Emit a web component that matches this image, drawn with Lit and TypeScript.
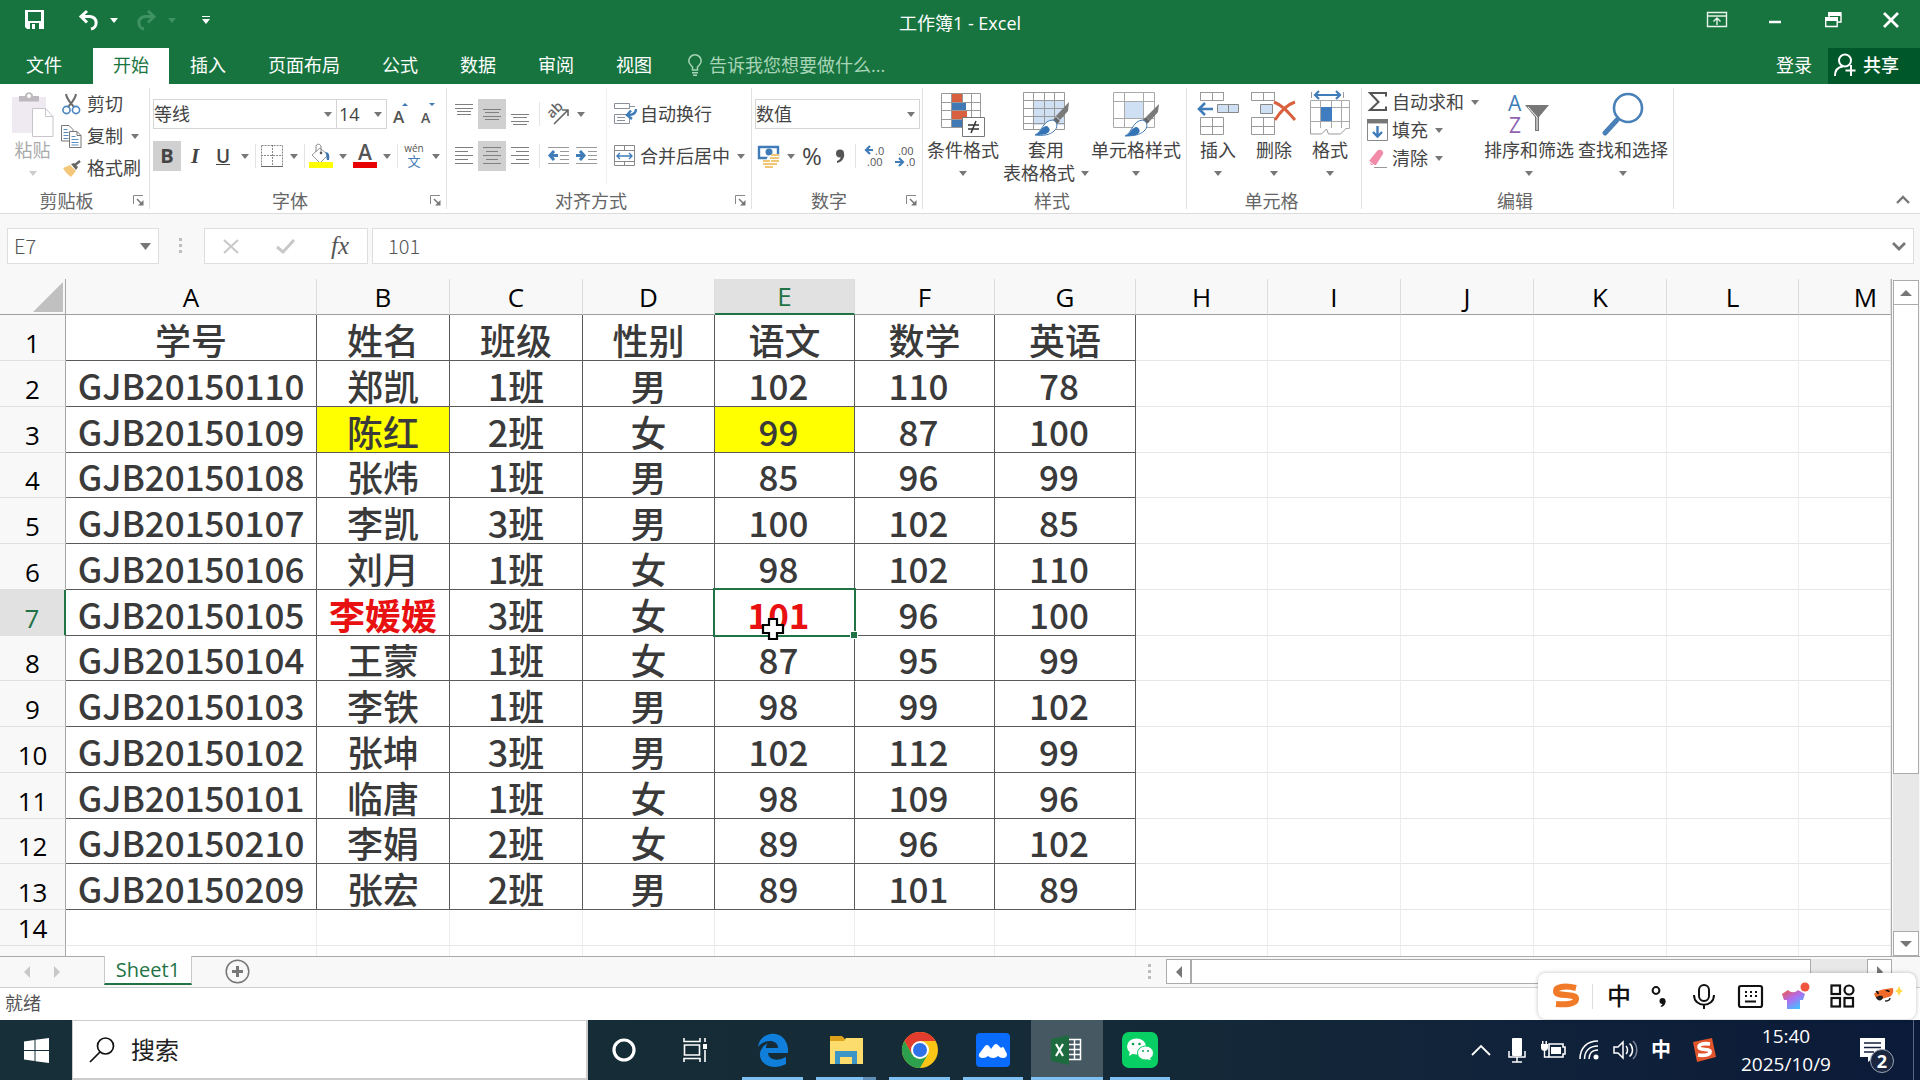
import { LitElement, html, css, svg, nothing, TemplateResult } from "lit";
import { customElement } from "lit/decorators.js";
import { classMap } from "lit/directives/class-map.js";

const icon = (w: number, h: number, body: unknown) =>
  html`<svg class="icon" width=${w} height=${h} viewBox="0 0 ${w} ${h}" fill="none" aria-hidden="true">${body}</svg>`;

const caret = html`<svg class="caret" width="8" height="5" viewBox="0 0 8 5" aria-hidden="true"><path d="M0 0h8L4 5z" fill="currentColor" /></svg>`;

const lines = (spans: number[][]) =>
  icon(20, 20, svg`<path d=${spans.map(([x, y, w]) => `M${x} ${y}.5h${w}`).join("")} stroke="#808080" />`);

const I = {
  save: icon(20, 20, svg`<path d="M0 0h19v19H2l-2-2z" fill="#fff"/><path d="M3 2h13v9H3zM5 13h9v6H5z" fill="#18743f"/><path d="M7 14h3v5H7z" fill="#fff"/>`),
  undo: icon(21, 21, svg`<path d="M3 6.5h9c8 1 8 11 1 12.5" stroke="#fff" stroke-width="3"/><path d="M9 1 3 6.5l6 6" stroke="#fff" stroke-width="3"/>`),
  redo: icon(21, 21, svg`<path d="M18 6.5H9C1 7.5 1 17.500 8 19" stroke="#3f9262" stroke-width="3"/><path d="m12 1 6 5.5-6 6" stroke="#3f9262" stroke-width="3"/>`),
  custom: icon(8, 8, svg`<path d="M0 .5h8" stroke="#fff"/><path d="M0 3h8L4 8z" fill="#fff"/>`),
  ribbonOpt: icon(20, 16, svg`<path d="M.5.5h19v14H.5zM.5 4h19M10 13V6M6.5 9.500 10 6l3.500 3.500" stroke="#e6f2ea" stroke-width="1.4"/>`),
  min: icon(14, 16, svg`<path d="M1 10h12" stroke="#fff" stroke-width="2.5"/>`),
  restore: icon(17, 16, svg`<path d="M4 5V1h12v9h-4" stroke="#fff" stroke-width="1.4"/><path d="M3 0h13v4H3zM0 5h13v4H0z" fill="#fff"/><path d="M.7 6h11.500v8.500H.7z" stroke="#fff" stroke-width="1.4"/>`),
  close: icon(16, 16, svg`<path d="m1 1 14 14M15 1 1 15" stroke="#fff" stroke-width="2.8"/>`),
  bulb: icon(14, 22, svg`<path d="M4.5 16v-3C3 11 .8 10 .8 7a6.200 6.200 0 0 1 12.400 0c0 3-2.200 4-3.700 6v3z" stroke="#a8d5b8" stroke-width="1.5"/><path d="M4 18h6v1.500H4zM5 20.500h4V22H5z" fill="#a8d5b8"/>`),
  share: icon(22, 24, svg`<circle cx="11" cy="7.5" r="6" stroke="#fff" stroke-width="2"/><path d="M1 23c0-6 3-9 8-9.500M17 12v11M11.500 17.500h10" stroke="#fff" stroke-width="2"/>`),
  paste: icon(43, 46, svg`<path d="M1 5h34v36H1z" fill="#efe9f1"/><path d="M8 9.500V4h6c0-5 8-5 8 0h6v5.500z" fill="#bdb9be"/><circle cx="18" cy="4" r="2" fill="#fff"/><path d="M21.500 16.500h13l7.500 8v20H21.500z" fill="#fff" stroke="#c9c4cb"/><path d="M34.500 16.500v8H42" stroke="#c9c4cb"/>`),
  cut: icon(19, 21, svg`<path d="M4 0c1 6 5 9 8 13M14 0c-1 6-5 9-8 13" stroke="#6a6a6a" stroke-width="2"/><circle cx="4.5" cy="16" r="3.6" stroke="#4a86bf" stroke-width="1.6"/><circle cx="14" cy="16" r="3.6" stroke="#4a86bf" stroke-width="1.6"/>`),
  copy: icon(21, 23, svg`<path d="M.5.5H8l4 4V16H.5z" fill="#fff" stroke="#777"/><path d="M2.500 4.500h4M2.500 7.500h5M2.500 10.500h5M2.500 13.500h5" stroke="#5c8fc0"/><path d="M8.500 6.500H16l4 4v12H8.500z" fill="#fff" stroke="#777"/><path d="M16 6.500v4h4" stroke="#777"/><path d="M10.500 11.500h4M10.500 14.500h7M10.500 17.500h7M10.500 20h7" stroke="#5c8fc0"/>`),
  brush: icon(18, 17, svg`<path d="m0 8 7-3 6 6-5 6C5 15 2 12 0 8z" fill="#f5c77a"/><path d="m8 4 3-1 4 4-2 3z" fill="#666"/><path d="m12 5 5-4" stroke="#666" stroke-width="2.5"/>`),
  grow: icon(16, 22, svg`<text x="0" y="20" font-size="17" font-weight="600" fill="#555">A</text><path d="M9 3h6l-3-3z" fill="#3d78b0"/>`),
  shrink: icon(16, 22, svg`<text x="0" y="20" font-size="14" font-weight="600" fill="#555">A</text><path d="M8 0h6l-3 3z" fill="#3d78b0"/>`),
  border: icon(22, 22, svg`<path d="M.5.5h21v21M.5.5v21M11.500 0v21M0 10.500h21" stroke="#888" stroke-dasharray="2 1"/><path d="M0 21.500h22" stroke="#666"/>`),
  fill: icon(26, 25, svg`<path d="m4 11 8-7 8 7-8 8z" fill="#fff" stroke="#999"/><path d="M8 8V2c1-3 5-2 5 1v6" stroke="#888"/><circle cx="13" cy="9" r="1.3" fill="#555"/><path d="M17 8c4 0 5 3 4 8h-2c-1-3 0-5-2-8z" fill="#3f77b0"/><path d="M1 18h24v6H1z" fill="#ff0"/>`),
  fontColor: icon(24, 25, svg`<text x="12" y="16" font-size="21" font-weight="600" text-anchor="middle" fill="#555">A</text><path d="M0 18h24v6H0z" fill="#e80000"/>`),
  wen: icon(20, 24, svg`<text x="10" y="8" font-size="10" text-anchor="middle" fill="#555">wén</text><text x="10" y="22" font-size="13" text-anchor="middle" fill="#3f7cb8">文</text>`),
  top: lines([[1, 0, 18], [1, 4, 18], [3, 7, 14], [3, 10, 14]]),
  mid: lines([[1, 5, 18], [3, 8, 14], [1, 12, 18], [3, 15, 14]]),
  bot: lines([[1, 10, 18], [3, 13, 14], [1, 17, 18], [3, 20, 14]]),
  left: lines([[1, 1, 18], [1, 5, 13], [1, 9, 18], [1, 13, 13], [1, 17, 18]]),
  center: lines([[1, 1, 18], [4, 5, 12], [1, 9, 18], [4, 13, 12], [1, 17, 18]]),
  right: lines([[1, 1, 18], [6, 5, 13], [1, 9, 18], [6, 13, 13], [1, 17, 18]]),
  orient: icon(24, 22, svg`<text transform="translate(5 16) rotate(-45)" font-size="14" font-weight="600" fill="#666">ab</text><path d="M7 21 21 7M21 13V7h-6" stroke="#666" stroke-width="1.6"/>`),
  outdent: icon(22, 18, svg`<path d="M0 .5h21M12 4.500h9M12 8.500h9M12 12.500h9M0 16.500h21" stroke="#999"/><path d="M10 8.500H3M6 4 2 8.500 6 13" stroke="#3f7cb8" stroke-width="3"/>`),
  indent: icon(22, 18, svg`<path d="M0 .5h21M12 4.500h9M12 8.500h9M12 12.500h9M0 16.500h21" stroke="#999"/><path d="M0 8.500h7M4 4l4 4.500L4 13" stroke="#3f7cb8" stroke-width="3"/>`),
  wrap: icon(22, 22, svg`<path d="M.5.5h15v5H.5zM15 3.500h6M.5 11.500h15v9H.5zM3 14.500h8M3 17.500h8" stroke="#8a9099"/><path d="M22 6c0 4-2 6-8 6M17 7.500l-4 4.500 5 4" stroke="#3f7cb8" stroke-width="2.4"/>`),
  merge: icon(22, 22, svg`<path d="M.5.5h20v20H.5zM0 5.500h21M0 16.500h21M10.500 0v5M10.500 16v5" stroke="#888"/><path d="M3 11h15M6 8l-3 3 3 3M15 8l3 3-3 3" stroke="#3f7cb8" stroke-width="1.4"/>`),
  money: icon(22, 23, svg`<path d="M1 2h19v11H1z" fill="#fff" stroke="#3f7cb8" stroke-width="2.4"/><circle cx="11" cy="7" r="3.5" fill="#3f7cb8"/><path d="M9 13c2-4 9-5 13-1v5c-3 5-10 7-15 4z" fill="#fff"/><g stroke="#f0c674" stroke-width="2"><path d="M13 10h8M12 13h9M5 16h7M13 16h8M5 19h14M7 22h8"/></g>`),
  comma: icon(11, 15, svg`<circle cx="6" cy="4.5" r="4" fill="#555"/><path d="M10 4c1 5-2 9-7 10v-2c3-1 4-3 4-6z" fill="#555"/>`),
  incDec: icon(22, 22, svg`<path d="M9 5H3M6 1 2 5l4 4" stroke="#3f7cb8" stroke-width="2.2"/><text x="11" y="10" font-size="11" fill="#555">.0</text><text x="3" y="21" font-size="11" fill="#555">.00</text>`),
  decDec: icon(22, 22, svg`<text x="3" y="10" font-size="11" fill="#555">.00</text><path d="M0 17h7M4 13l4 4-4 4" stroke="#3f7cb8" stroke-width="2.2"/><text x="11" y="21" font-size="11" fill="#555">.0</text>`),
  cond: icon(44, 46, svg`<path d="M.5 1.500h39v34H.5zM0 10.500h40M0 18.500h40M0 27.500h40M10.500 1v35M21.500 1v35M30.500 1v35" fill="#fff" stroke="#999"/><path d="M11 2h10v8H11zM11 19h15v8H11z" fill="#d9603f"/><path d="M11 11h14v7H11zM11 28h10v7H11z" fill="#4179b5"/><path d="M21.500 25.500h22v19h-22z" fill="#fff" stroke="#777"/><path d="M27 33h11M27 37h11M35 29l-5 12" stroke="#333" stroke-width="1.5"/>`),
  tableFmt: icon(47, 46, svg`<path d="M.5.5h41v37H.5z" fill="#fff"/><path d="M11 8h31v25H11z" fill="#cfe0f5"/><path d="M.5.5h41v37H.5zM0 8.500h42M0 16.500h42M0 24.500h42M0 31.500h42M10.500 0v38M21.500 0v38M31.500 0v38" stroke="#999"/><path d="m46 10-1 9-8 9-4-4z" fill="#7a7a7a"/><path d="m33 25 4 4-3 3-4-4z" fill="#666"/><path d="M30 28c5 2 5 8 1 11-4 4-11 5-19 4 7-3 8-15 18-15z" fill="#fff" stroke="#4179b5"/><path d="M12 43c6-2 6-9 12-9 6 4 2 10-12 9z" fill="#3474b5"/>`),
  cellStyle: icon(47, 46, svg`<path d="M.5.5h41v35H.5z" fill="#fff"/><path d="M12 10h18v16H12z" fill="#cfe0f5"/><path d="M.5.5h41v35H.5zM0 9.500h42M0 26.500h42M11.500 0v36M30.500 0v36" stroke="#aaa"/><path d="m46 12-1 8-8 9-4-4z" fill="#7a7a7a"/><path d="m33 25 4 4-3 3-4-4z" fill="#666"/><path d="M30 28c5 2 5 8 1 11-4 4-11 5-19 5 7-3 8-16 18-16z" fill="#fff" stroke="#4179b5"/><path d="M12 44c6-2 6-9 12-9 6 4 2 10-12 9z" fill="#3474b5"/>`),
  insert: icon(42, 46, svg`<path d="M3.500 0v8.500h23V0M15.500 0v8M3.500 25.500h23v17h-23zM3 34.500h24M15.500 25v18M3 .5h24" stroke="#999"/><path d="M20.500 12.500h21v8h-21z" fill="#cfe0f5" stroke="#888"/><path d="M31.500 12v9" stroke="#888"/><path d="M16 17H3M8 11l-6 6 6 6" stroke="#3f7cb8" stroke-width="2.6"/>`),
  remove: icon(46, 46, svg`<path d="M.5 0v8.500h23V0M12.500 0v8M.5 25.500h23v17H.5zM0 34.500h24M12.500 25v18M0 .5h24" stroke="#999"/><path d="M9.500 12.500h12v9h-12z" fill="#cfe0f5" stroke="#888"/><path d="M23 10c8 3 14 10 21 18M44 10c-9 3-15 10-20 18" stroke="#d9603f" stroke-width="3"/>`),
  format: icon(41, 46, svg`<path d="M1.500 0v6M33.500 0v6" stroke="#999"/><path d="M5 3h25M9-1 5 3l4 4M26-1l4 4-4 4" stroke="#3f7cb8" stroke-width="2.2"/><path d="M.5 8.500h39v28H.5zM0 15.500h40M0 29.500h40M10.500 8v29M21.500 8v29M31.500 8v29" stroke="#aaa"/><path d="M11 15h11v14H11z" fill="#3f7cc0"/><path d="M.5 36v6h11l5-5 2 5h12l6-6" fill="#fff" stroke="#999"/>`),
  sum: icon(20, 20, svg`<path d="M18 4.500V1H2l8.500 9L2 18h16v-3.500" stroke="#555" stroke-width="2"/>`),
  down: icon(21, 22, svg`<path d="M.5 4h20v17.500H.5z" stroke="#888"/><path d="M0 0h21v4H0z" fill="#777"/><path d="M10.500 7v10M6 13l4.500 4.500L15 13" stroke="#3f7cb8" stroke-width="2.4"/>`),
  erase: icon(20, 19, svg`<path d="m1 12 8-10c3-3 7 0 6 3L8 16H3z" fill="#f28ba8"/><path d="m1 12 6 5" stroke="#fff"/><path d="M6 18.500h13" stroke="#999"/>`),
  sort: icon(42, 44, svg`<text x="0" y="18" font-size="21" fill="#3f7cb8">A</text><text x="1" y="40" font-size="21" fill="#8e62b0">Z</text><path d="M17 12h24L31 24v14h-4V24z" fill="#777"/><path d="m20 14 9 10v13" stroke="#fff"/>`),
  find: icon(42, 44, svg`<circle cx="26" cy="15" r="14" stroke="#4a80b8" stroke-width="2.6"/><path d="M15 27 3 40" stroke="#4a80b8" stroke-width="5" stroke-linecap="round"/>`),
  launch: icon(11, 11, svg`<path d="M.5 9V.5H10" stroke="#888"/><path d="m4 4 5 5" stroke="#777" stroke-width="1.5"/><path d="M10.500 5v5.500H5z" fill="#777"/>`),
  up: icon(14, 9, svg`<path d="m1 8 6-6 6 6" stroke="#777" stroke-width="2.4"/>`),
  dn: icon(14, 9, svg`<path d="m1 1 6 6 6-6" stroke="#777" stroke-width="2.8"/>`),
  cancel: icon(17, 15, svg`<path d="m1 1 14 13M15 1 1 14" stroke="#c8c8c8" stroke-width="2"/>`),
  ok: icon(19, 15, svg`<path d="m1 8 6 5L18 1" stroke="#c8c8c8" stroke-width="3"/>`),
  dots: icon(4, 16, svg`<path d="M0 0h3v3H0zM0 6h3v3H0zM0 12h3v3H0z" fill="#bdbdbd"/>`),
  tri: (d: string, c = "#777") => icon(12, 12, svg`<path d=${d} fill=${c} />`),
  add: icon(25, 25, svg`<circle cx="12.5" cy="12.5" r="11.3" stroke="#777" stroke-width="1.5"/><path d="M12.500 7v11M7 12.500h11" stroke="#777" stroke-width="3"/>`),
  win: icon(25, 25, svg`<path d="m0 3.500 10.500-1.500v10H0zM11.500 1.800 25 0v12H11.500zM0 13h10.500v10L0 21.500zM11.500 13H25v12l-13.500-1.800z" fill="#fff"/>`),
  search: icon(26, 26, svg`<circle cx="16.5" cy="9" r="8" stroke="#111" stroke-width="1.7"/><path d="M11 15 1 25" stroke="#111" stroke-width="1.7"/>`),
  ring: icon(24, 24, svg`<circle cx="12" cy="12" r="10" stroke="#fff" stroke-width="3.2"/>`),
  view: icon(26, 24, svg`<path d="M1 0v3.500h16V0M1 24v-3.500h16V24M1.500 7h15v10h-15zM22 0v4M22 12v12" stroke="#fff" stroke-width="1.6"/><path d="M20 6h4v5h-4z" fill="#fff"/>`),
  edge: icon(32, 34, svg`<path d="M1 14C3-3 29-5 31 16v4H11c1 8 11 8 18 4v7C16 38 2 32 3 20c1-5 4-8 8-10-2 2-2 3-2 5h12c0-9-14-9-20-1z" fill="#0f7fdb"/>`),
  folder: icon(33, 28, svg`<path d="M0 0h12l3 3v5H0z" fill="#dca21c"/><path d="M0 5h14l2-3h17v26H0z" fill="#fcdc6c"/><path d="M5 28V15h22v13h-5v-7H10v7z" fill="#3d94c6"/>`),
  chrome: icon(36, 36, svg`<circle cx="18" cy="18" r="18" fill="#fbc516"/><path d="M2.400 9A18 18 0 0 1 33.600 9H18v9l-7.800 4.500z" fill="#e33b2e"/><path d="M2.400 9A18 18 0 0 0 18 36l7.800-13.500L18 18l-7.800 4.500z" fill="#2da04e"/><circle cx="18" cy="18" r="9" fill="#fff"/><circle cx="18" cy="18" r="7" fill="#2f71e8"/>`),
  meeting: icon(34, 34, svg`<rect width="34" height="34" rx="4" fill="#0a6cff"/><path d="M3 21 9 13q2-2 4 0l2 3 3-4q2-2 4 0l3 3q2-2 3 0l3 6q0 4-4 4-3 0-5-2-2 2-5 2t-5-2q-2 2-5 2-5 0-4-4z" fill="#fff"/>`),
  excel: icon(32, 30, svg`<path d="M0 4 18 0v30L0 26z" fill="#1d6b3f"/><path d="M18 4.500h11.500v20H18M18 9.500h12M18 14.500h12M18 19.500h12M23.500 4v21" stroke="#fff" stroke-width="1.5"/><path d="m5 9 7 12M12 9 5 21" stroke="#fff" stroke-width="2.2"/>`),
  wechat: icon(36, 36, svg`<rect width="36" height="36" rx="7" fill="#07cf63"/><ellipse cx="14.5" cy="14.5" rx="9.5" ry="8" fill="#fff"/><path d="m8 19-1 5 5-3z" fill="#fff"/><ellipse cx="23.5" cy="21" rx="8" ry="7" fill="#fff" stroke="#07cf63"/><path d="m27 25 2 3-5-1z" fill="#fff"/><g fill="#07a050"><circle cx="11" cy="12" r="1.3"/><circle cx="17.5" cy="12" r="1.3"/><circle cx="21" cy="19" r="1"/><circle cx="26" cy="19" r="1"/></g>`),
  chev: icon(20, 12, svg`<path d="m1 11 9-9 9 9" stroke="#fff" stroke-width="1.8"/>`),
  tmic: icon(18, 25, svg`<rect x="4" y="0" width="10" height="18" rx="1" fill="#fff"/><path d="M1 13v6h16v-6M9 19v5M4 24h10" stroke="#fff" stroke-width="1.5"/>`),
  battery: icon(25, 20, svg`<path d="M8 4h14v3h2v7h-2v3H8z" stroke="#fff" stroke-width="1.6"/><path d="M10 7h10v7H10z" fill="#fff"/><path d="M0 4h7v4c0 2-2 3-3.500 3S0 10 0 8zM1 1h1.500v3H1zM4.500 1H6v3H4.500z" fill="#fff"/><path d="M3.500 10v7H8" stroke="#fff" stroke-width="1.4"/>`),
  wifi: icon(20, 20, svg`<path d="M1 19C1 8 8 1 19 1M5.500 19c0-8 5-13 13.500-13M10 19c0-5 3-9 9-9" stroke="#fff" stroke-width="1.5"/><circle cx="17" cy="17" r="2.5" fill="#fff"/>`),
  volume: icon(25, 20, svg`<path d="M1 7h4l5-5v16l-5-5H1z" stroke="#fff" stroke-width="1.5"/><path d="M13 6c2 2 2 6 0 8M16.500 3.500c4 3 4 10 0 13" stroke="#fff" stroke-width="1.5"/><path d="M20 1c5 5 5 13 0 18" stroke="#7b8597" stroke-width="1.5"/>`),
  sogouTray: icon(24, 24, svg`<path d="M1 4 20 0l4 19-19 5z" fill="#e2542b"/><path d="M18 6c-6-1-11 0-11 3 0 4 12 1 11 5 0 3-6 4-12 3" stroke="#fff" stroke-width="3.6"/>`),
  note: icon(26, 24, svg`<path d="M0 0h25v19H14l-6 5v-5H0z" fill="#fff"/><path d="M4 5h17M4 9.500h17M4 14h10" stroke="#14213c" stroke-width="1.5"/>`),
  sogou: icon(28, 24, svg`<path d="M24 4C12 1 3 3 4 8c1 5 21 1 20 7 0 5-10 6-20 5" stroke="#f07a28" stroke-width="6"/>`),
  punct: icon(15, 22, svg`<circle cx="5" cy="5.5" r="3.4" stroke="#111" stroke-width="2"/><circle cx="11.5" cy="16" r="3" fill="#111"/><path d="M14.500 16c0 3-1 5-4 6l-1-1c2-1 2-2 2-4z" fill="#111"/>`),
  mic: icon(22, 25, svg`<rect x="6" y="1" width="10" height="16" rx="5" stroke="#111" stroke-width="2"/><path d="M1 11c0 13 20 13 20 0M11 21v4" stroke="#111" stroke-width="2"/>`),
  keyb: icon(25, 23, svg`<rect x="1" y="1" width="23" height="21" rx="2" stroke="#111" stroke-width="2.2"/><path d="M7 7h2M12 7h2M17 7h2M7 11h2M12 11h2M17 11h2" stroke="#111" stroke-width="2"/><path d="M7 16.500h11" stroke="#111" stroke-width="2"/>`),
  shirt: icon(28, 28, svg`<defs><linearGradient id="sh" x1="0" y1="0" x2=".7" y2="1"><stop offset="0" stop-color="#f2553d"/><stop offset=".5" stop-color="#b06cf0"/><stop offset="1" stop-color="#3fc4ff"/></linearGradient></defs><path d="M6 8c3 3 7 3 10 0l7 4-2 6h-3v9H5v-9H2L0 12z" fill="url(#sh)"/><circle cx="23" cy="5" r="4.5" fill="#f2553d"/>`),
  apps: icon(25, 24, svg`<g stroke="#111" stroke-width="2.2"><rect x="1.5" y="1.5" width="8.5" height="8.5"/><circle cx="19" cy="6" r="4.5"/><rect x="1.5" y="14" width="8.5" height="8.5"/><rect x="14.5" y="14" width="8.5" height="8.5"/></g>`),
  mascot: icon(30, 20, svg`<path d="M1 8C6 3 13 3 20 2c1 5-1 8-4 9-5 1-9 3-13 1z" fill="#f06a2a"/><path d="M3 6c1-1 2 0 2 2M13 5c1-1 3 0 3 1" stroke="#111" stroke-width="1.6"/><path d="M3 11c3-1 6-2 7 0 0 4-6 5-7 0z" fill="#222"/><path d="M12 15c3 0 5-1 5-3" stroke="#222" stroke-width="1.4"/><path d="m26 0 1.500 3.500L30 5l-2.500 1.500L26 10l-1.500-3.500L22 5l2.500-1.500z" fill="#ffd94a"/>`),
};

interface Student { id: string; name: string; cls: string; sex: string; scores: number[] }
const STUDENTS: Student[] = [
  ["GJB20150110", "郑凯", "1班", "男", 102, 110, 78],
  ["GJB20150109", "陈红", "2班", "女", 99, 87, 100],
  ["GJB20150108", "张炜", "1班", "男", 85, 96, 99],
  ["GJB20150107", "李凯", "3班", "男", 100, 102, 85],
  ["GJB20150106", "刘月", "1班", "女", 98, 102, 110],
  ["GJB20150105", "李媛媛", "3班", "女", 101, 96, 100],
  ["GJB20150104", "王蒙", "1班", "女", 87, 95, 99],
  ["GJB20150103", "李铁", "1班", "男", 98, 99, 102],
  ["GJB20150102", "张坤", "3班", "男", 102, 112, 99],
  ["GJB20150101", "临唐", "1班", "女", 98, 109, 96],
  ["GJB20150210", "李娟", "2班", "女", 89, 96, 102],
  ["GJB20150209", "张宏", "2班", "男", 89, 101, 89],
].map(([id, name, cls, sex, ...scores]) => ({ id, name, cls, sex, scores } as Student));

const HEAD = ["学号", "姓名", "班级", "性别", "语文", "数学", "英语"];
const COLS = "ABCDEFGHIJKLM".split("");
const YELLOW = new Set(["B3", "E3"]);
const RED = new Set(["B7", "E7"]);
const ACTIVE = "E7";

const shared = css`
  :host, * { box-sizing: border-box; }
  button, input, select {
    font: inherit; color: inherit; background: none; border: 0; border-radius: 0;
    padding: 0; margin: 0; outline: 0; appearance: none; line-height: inherit;
  }
  button { display: flex; align-items: center; justify-content: center; white-space: nowrap; }
  svg { display: block; flex: none; overflow: visible; }
`;

@customElement("excel-titlebar")
class ExcelTitlebar extends LitElement {
  static styles = [shared, css`
    :host { display: block; background: #18743f; color: #fff; }
    .title { display: grid; grid-template-columns: 1fr auto 1fr; height: 48px; align-items: center; padding-bottom: 2px; }
    .quick { display: flex; align-items: center; padding: 0 0 6px 25px; }
    .quick .save { margin-right: 33px; }
    .quick .drop { width: 30px; margin-right: 7px; }
    .quick .custom { width: 24px; }
    .quick .dim { color: #3f9262; }
    .name { line-height: 24px; }
    .win { display: flex; justify-content: flex-end; padding-bottom: 6px; }
    .win button { width: 58px; height: 24px; }
    .tabs { display: flex; height: 36px; line-height: 32px; }
    .tabs .tab { padding: 0 21px 2px; }
    .tabs .file { padding: 0 31px 2px 26px; }
    .tabs .on { padding: 0 20px 2px; background: #fff; color: #18743f; }
    .tell { display: flex; align-items: center; gap: 7px; padding: 0 0 2px 15px; flex: 1; color: #a8d5b8; }
    .tell input { flex: 1; min-width: 0; }
    .tell input::placeholder { color: #a8d5b8; opacity: 1; }
    .login { padding: 0 16px 2px; }
    .share { background: #00582a; gap: 7px; padding: 0 21px 2px 6px; font-weight: 500; }
  `];
  render() {
    const tabs = ["插入", "页面布局", "公式", "数据", "审阅", "视图"];
    return html`
      <div class="title">
        <div class="quick">
          <button class="save" aria-label="保存">${I.save}</button>
          <button aria-label="撤消">${I.undo}</button>
          <button class="drop" aria-label="撤消列表">${caret}</button>
          <button aria-label="恢复">${I.redo}</button>
          <button class="drop dim" aria-label="恢复列表">${caret}</button>
          <button class="custom" aria-label="自定义快速访问工具栏">${I.custom}</button>
        </div>
        <div class="name">工作簿1 - Excel</div>
        <div class="win">
          <button aria-label="功能区显示选项">${I.ribbonOpt}</button>
          <button aria-label="最小化">${I.min}</button>
          <button aria-label="还原">${I.restore}</button>
          <button aria-label="关闭">${I.close}</button>
        </div>
      </div>
      <nav class="tabs">
        <button class="tab file">文件</button>
        <button class="tab on">开始</button>
        ${tabs.map((t) => html`<button class="tab">${t}</button>`)}
        <label class="tell">${I.bulb}<input placeholder="告诉我您想要做什么..." aria-label="告诉我您想要做什么" /></label>
        <button class="login">登录</button>
        <button class="share">${I.share}共享</button>
      </nav>`;
  }
}

@customElement("excel-ribbon")
class ExcelRibbon extends LitElement {
  static styles = [shared, css`
    :host { display: flex; height: 130px; background: #fff; color: #444; border-bottom: 1px solid #dcdcdc; padding-top: 4px; }
    .group { display: flex; flex-direction: column; flex: none; height: 121px; border-right: 1px solid #e2e2e2; }
    .body { display: flex; flex: none; height: 96px; }
    .caption { display: flex; align-items: center; flex: none; height: 25px; padding: 8px 5px 0 0; color: #666; }
    .caption span { flex: 1; text-align: center; line-height: 24px; }
    .caret { color: #777; }
    .clip { width: 150px; } .font { width: 297px; } .align { width: 305px; } .number { width: 171px; }
    .styles { width: 264px; } .cells { width: 175px; } .edit { width: 312px; }
    .big { display: grid; grid-template-rows: 47px 24px 22px; align-content: start; justify-items: center; padding-top: 3px; line-height: 24px; }
    .w56 { width: 56px; } .w80 { width: 80px; } .w86 { width: 86px; } .w94 { width: 94px; }
    .more { display: flex; align-items: center; gap: 6px; }
    .paste { width: 57px; margin-left: 4px; color: #aaa; }
    .paste .caret { color: #ccc; }
    .stack { display: flex; flex-direction: column; }
    .stack button { height: 32px; justify-content: flex-start; gap: 5px; line-height: 24px; }
    .stack .slot { display: flex; width: 21px; justify-content: center; }
    .stack .caret { margin-left: 3px; }
    .tight { padding: 0 0 0 5px; width: 120px; flex: none; }
    .tight button { height: 28px; gap: 4px; }
    .rows { display: flex; flex-direction: column; gap: 12px; padding: 11px 0 0 3px; }
    .row { display: flex; align-items: center; height: 30px; }
    .combo { display: flex; align-items: center; position: relative; height: 30px; border: 1px solid #d5d5d5; }
    .combo select { width: 100%; height: 28px; line-height: 26px; }
    .combo .caret { position: absolute; right: 4px; pointer-events: none; }
    .cFace { width: 184px; } .cSize { width: 50px; border-left: 0; padding-left: 2px; } .cNum { width: 165px; }
    .cell { width: 28px; height: 30px; }
    .on { background: #d0d0d0; }
    .car { width: 16px; height: 30px; }
    .b { font-weight: 700; font-size: 20px; }
    .i { font: italic 700 21px "Liberation Serif", serif; }
    .u { text-decoration: underline; font-weight: 600; font-size: 19px; }
    .sep { width: 1px; height: 24px; background: #e4e4e4; margin: 0 2px; flex: none; }
    .align .sep { margin: 0 5px; }
    .gap { width: 3px; }
    .align .mid { border-left: 1px solid #efefef; padding-left: 7px; margin-left: 5px; }
    .mid button { gap: 4px; justify-content: flex-start; }
    .mid .caret { margin-left: 3px; }
    .pct { font-size: 24px; font-weight: 500; width: 26px; }
    .sigs { display: flex; gap: 9px; margin-left: 6px; }
    .fold { margin: auto 10px 9px auto; }
  `];

  private group(cls: string, name: string, body: TemplateResult, launcher = true) {
    return html`<section class="group ${cls}"><div class="body">${body}</div>
      <div class="caption"><span>${name}</span>${launcher ? html`<button aria-label="${name}设置">${I.launch}</button>` : nothing}</div></section>`;
  }
  private big(ic: TemplateResult, label: string, cls: string, second = "") {
    return html`<button class="big ${cls}">${ic}<span>${label}</span><span class="more">${second}${caret}</span></button>`;
  }
  private small(ic: TemplateResult, label: string, drop = false) {
    return html`<button><span class="slot">${ic}</span>${label}${drop ? caret : nothing}</button>`;
  }
  private tool(ic: TemplateResult, label: string, cls = "") {
    return html`<button class="cell ${cls}" aria-label=${label}>${ic}</button>`;
  }
  private drop(label: string) {
    return html`<button class="car" aria-label="${label}选项">${caret}</button>`;
  }

  render() {
    return html`
      ${this.group("clip", "剪贴板", html`
        ${this.big(I.paste, "粘贴", "paste")}
        <div class="stack">
          ${this.small(I.cut, "剪切")}${this.small(I.copy, "复制", true)}${this.small(I.brush, "格式刷")}
        </div>`)}
      ${this.group("font", "字体", html`
        <div class="rows">
          <div class="row">
            <label class="combo cFace"><select aria-label="字体"><option>等线</option></select>${caret}</label>
            <label class="combo cSize"><select aria-label="字号"><option>14</option></select>${caret}</label>
            ${this.tool(I.grow, "增大字号")}${this.tool(I.shrink, "减小字号")}
          </div>
          <div class="row">
            <button class="cell on b" aria-label="加粗">B</button>
            <button class="cell i" aria-label="倾斜">I</button>
            <button class="cell u" aria-label="下划线">U</button>
            ${this.drop("下划线")}
            <span class="sep"></span>${this.tool(I.border, "边框")}${this.drop("边框")}
            <span class="sep"></span>${this.tool(I.fill, "填充颜色")}${this.drop("填充颜色")}
            ${this.tool(I.fontColor, "字体颜色")}${this.drop("字体颜色")}
            <span class="sep"></span>${this.tool(I.wen, "拼音")}${this.drop("拼音")}
          </div>
        </div>`)}
      ${this.group("align", "对齐方式", html`
        <div class="rows">
          <div class="row">
            ${this.tool(I.top, "顶端对齐")}${this.tool(I.mid, "垂直居中", "on")}${this.tool(I.bot, "底端对齐")}
            <span class="sep"></span>${this.tool(I.orient, "方向")}${this.drop("方向")}
          </div>
          <div class="row">
            ${this.tool(I.left, "左对齐")}${this.tool(I.center, "居中", "on")}${this.tool(I.right, "右对齐")}
            <span class="sep"></span>${this.tool(I.outdent, "减少缩进量")}${this.tool(I.indent, "增加缩进量")}
          </div>
        </div>
        <div class="rows mid">
          <button class="row">${I.wrap}自动换行</button>
          <button class="row">${I.merge}合并后居中${caret}</button>
        </div>`)}
      ${this.group("number", "数字", html`
        <div class="rows">
          <label class="combo cNum"><select aria-label="数字格式"><option>数值</option></select>${caret}</label>
          <div class="row">
            ${this.tool(I.money, "会计数字格式")}${this.drop("会计数字格式")}
            <button class="pct" aria-label="百分比样式">%</button>
            ${this.tool(I.comma, "千位分隔样式")}<span class="sep"></span>
            <span class="sigs"><button aria-label="增加小数位数">${I.incDec}</button><button aria-label="减少小数位数">${I.decDec}</button></span>
          </div>
        </div>`)}
      ${this.group("styles", "样式", html`
        ${this.big(I.cond, "条件格式", "w80")}${this.big(I.tableFmt, "套用", "w86", "表格格式")}${this.big(I.cellStyle, "单元格样式", "w94")}`, false)}
      ${this.group("cells", "单元格", html`<span class="gap"></span>
        ${this.big(I.insert, "插入", "w56")}${this.big(I.remove, "删除", "w56")}${this.big(I.format, "格式", "w56")}`, false)}
      ${this.group("edit", "编辑", html`
        <div class="stack tight">
          ${this.small(I.sum, "自动求和", true)}${this.small(I.down, "填充", true)}${this.small(I.erase, "清除", true)}
        </div>
        ${this.big(I.sort, "排序和筛选", "w94")}${this.big(I.find, "查找和选择", "w94")}`, false)}
      <button class="fold" aria-label="折叠功能区">${I.up}</button>`;
  }
}

@customElement("excel-formula-bar")
class ExcelFormulaBar extends LitElement {
  static styles = [shared, css`
    :host { display: flex; height: 65px; padding: 14px 6px 15px 7px; background: #f8f8f8; color: #555; font: 300 20px/24px "Noto Sans CJK SC", sans-serif; }
    .box { display: flex; align-items: center; background: #fff; border: 1px solid #dedede; }
    .name { width: 152px; padding: 0 7px 0 6px; }
    .name input { flex: 1; min-width: 0; }
    .dots { display: flex; align-items: center; padding: 0 21px 0 20px; }
    .tools { width: 164px; justify-content: space-between; padding: 0 18px; }
    .fx { font: italic 25px/24px "Liberation Serif", serif; }
    .entry { flex: 1; margin-left: 4px; padding: 0 7px 0 15px; }
    .entry input { flex: 1; min-width: 0; }
  `];
  render() {
    return html`
      <div class="box name"><input aria-label="名称框" .value=${ACTIVE} /><button aria-label="名称列表"><svg width="11" height="7" viewBox="0 0 11 7"><path d="M0 0h11L5.500 7z" fill="#777" /></svg></button></div>
      <div class="dots">${I.dots}</div>
      <div class="box tools">
        <button aria-label="取消">${I.cancel}</button><button aria-label="输入">${I.ok}</button><button class="fx" aria-label="插入函数">fx</button>
      </div>
      <div class="box entry"><input aria-label="编辑栏" .value=${"101"} /><button aria-label="展开编辑栏">${I.dn}</button></div>`;
  }
}

@customElement("excel-sheet")
class ExcelSheet extends LitElement {
  static styles = [shared, css`
    :host { display: grid; grid-template-columns: 1fr 28px; flex: 1; min-height: 0; overflow: hidden; background: #f8f8f8; border-bottom: 1px solid #ababab; }
    .view { overflow: hidden; border-right: 1px solid #ababab; position: relative; min-height: 0; background: #fff; }
    table { width: 100%; border-collapse: separate; border-spacing: 0; table-layout: fixed; }
    th { font: 400 26px/32px "Open Sans", "Noto Sans", sans-serif; color: #000; background: #f8f8f8; padding: 0; }
    thead th { height: 36px; border-right: 1px solid #dcdcdc; border-bottom: 1px solid #9f9f9f; }
    thead th:last-child { padding-left: 42px; }
    tbody th { border-right: 1px solid #a6a6a6; border-bottom: 1px solid #e0e0e0; vertical-align: bottom; padding-bottom: 1px; }
    thead .corner { border-right-color: #a6a6a6; }
    .corner svg { margin: 0 2px 0 auto; }
    thead th.sel { background: #e1e1e1; color: #217346; border-bottom: 2px solid #217346; }
    tbody th.sel { background: #e1e1e1; color: #217346; border-right: 2px solid #217346; }
    tr { height: 36px; }
    tr.data { height: 46px; }
    tr.data:nth-child(4n) { height: 45px; }
    td { padding: 0; border-right: 1px solid #ececec; border-bottom: 1px solid #e6e6e6; }
    td.v { font: 500 36px/40px "Noto Sans CJK SC", sans-serif; color: #3a3a3a; text-align: center; white-space: nowrap; border-color: #5a5a5a; padding-top: 2px; }
    td.latin { font-size: 35px; }
    td.num { padding-right: 12px; }
    td.yellow { background: #ff0; }
    td.red { color: #e81010; font-weight: 700; }
    td.active { position: relative; }
    td.active::before { content: ""; position: absolute; inset: -2px; border: 2px solid #217346; }
    td.active::after { content: ""; position: absolute; right: -3px; bottom: -3px; width: 6px; height: 6px; background: #217346; outline: 1px solid #fff; }
    .cross { position: absolute; left: 46px; top: 27px; z-index: 2; }
    .bar { display: flex; flex-direction: column; margin: 1px 1px 0 1px; background: #e8e8e8; }
    .bar button { height: 25px; background: #fff; border: 1px solid #ababab; }
    .thumb { flex: 471; background: #fff; border: 1px solid #ababab; border-top: 0; }
    .rest { flex: 158; }
    .c0 { width: 66px; } .cA { width: 251px; } .c133 { width: 133px; } .c132 { width: 132px; } .c140 { width: 140px; } .c141 { width: 141px; }
  `];

  private row(n: number, values: (string | number)[]) {
    return html`<tr class="data">
      <th scope="row" class=${n === 7 ? "sel" : ""}>${n}</th>
      ${COLS.map((c, i) => {
        if (i >= values.length) return html`<td></td>`;
        const ref = c + n;
        const v = values[i];
        const num = typeof v === "number";
        return html`<td class=${classMap({ v: true, num, latin: num || (i === 0 && n > 1), yellow: YELLOW.has(ref), red: RED.has(ref), active: ref === ACTIVE })}>${v}${
          ref === ACTIVE
            ? html`<svg class="cross" width="24" height="24" viewBox="0 0 24 24"><path d="M8 2h8v6h6v8h-6v6H8v-6H2V8h6z" fill="#fff" stroke="#000" stroke-width="2.2"/></svg>`
            : nothing}</td>`;
      })}
    </tr>`;
  }

  render() {
    const widths = ["c0", "cA", "c133", "c133", "c132", "c140", "c140", "c141", "c132", "c133", "c133", "c133", "c132", ""];
    return html`
      <div class="view">
        <table>
          <colgroup>${widths.map((w) => html`<col class=${w} />`)}</colgroup>
          <thead><tr>
            <th class="corner" aria-label="全选"><svg width="30" height="30" viewBox="0 0 30 30"><path d="M30 0v30H0z" fill="#c0c0c0"/></svg></th>
            ${COLS.map((c) => html`<th scope="col" class=${c === "E" ? "sel" : ""}>${c}</th>`)}
          </tr></thead>
          <tbody>
            ${this.row(1, HEAD)}
            ${STUDENTS.map((s, i) => this.row(i + 2, [s.id, s.name, s.cls, s.sex, ...s.scores]))}
            ${[14, 15].map((n) => html`<tr><th scope="row">${n}</th>${COLS.map(() => html`<td></td>`)}</tr>`)}
          </tbody>
        </table>
      </div>
      <div class="bar">
        <button aria-label="向上滚动">${I.tri("M0 9h12L6 3z")}</button>
        <div class="thumb"></div><div class="rest"></div>
        <button aria-label="向下滚动">${I.tri("M0 3h12L6 9z")}</button>
      </div>`;
  }
}

@customElement("excel-footer")
class ExcelFooter extends LitElement {
  static styles = [shared, css`
    :host { display: block; background: #f8f8f8; }
    .tabs { display: flex; height: 31px; border-bottom: 1px solid #cfcfcf; }
    .nav { display: flex; align-items: center; gap: 18px; width: 104px; padding-left: 21px; }
    .sheet { width: 88px; height: 29px; margin-top: -1px; background: #fff; color: #217346; border: 1px solid #c8c8c8; border-width: 0 1px 2px; border-bottom-color: #217346; font: 20px/26px "Open Sans", sans-serif; }
    .add { margin: 2px 0 0 33px; align-self: flex-start; }
    .fill { flex: 1; }
    .dots { display: flex; align-items: center; margin-right: 14px; }
    .scroll { display: flex; width: 726px; height: 25px; margin: 2px 28px 0 0; background: #e8e8e8; }
    .scroll button { width: 25px; background: #fff; border: 1px solid #ababab; }
    .thumb { flex: 620; background: #fff; border: 1px solid #ababab; }
    .rest { flex: 56; }
    .status { height: 32px; padding: 0 5px; line-height: 30px; color: #555; background: #fff; }
  `];
  render() {
    return html`
      <div class="tabs">
        <div class="nav">
          <button aria-label="上一张">${I.tri("M9 0v12L3 6z", "#c8c8c8")}</button>
          <button aria-label="下一张">${I.tri("M3 0v12l6-6z", "#c8c8c8")}</button>
        </div>
        <button class="sheet">Sheet1</button>
        <button class="add" aria-label="新工作表">${I.add}</button>
        <span class="fill"></span>
        <span class="dots">${I.dots}</span>
        <div class="scroll">
          <button aria-label="向左滚动">${I.tri("M9 0v12L3 6z")}</button>
          <div class="thumb"></div><div class="rest"></div>
          <button aria-label="向右滚动">${I.tri("M3 0v12l6-6z")}</button>
        </div>
      </div>
      <div class="status">就绪</div>`;
  }
}

@customElement("ime-bar")
class ImeBar extends LitElement {
  static styles = [shared, css`
    :host { display: flex; align-items: center; height: 46px; padding: 0 5px 0 13px; background: #fff; border-radius: 8px; box-shadow: 0 0 4px rgba(0, 0, 0, 0.25); }
    button { width: 46px; height: 40px; color: #111; }
    .logo { width: 29px; }
    .sep { width: 1px; height: 25px; background: #ddd; margin: 0 4px 0 12px; }
    .zh { font-size: 24px; font-weight: 500; width: 38px; padding-left: 6px; }
  `];
  render() {
    return html`<button class="logo" aria-label="搜狗输入法">${I.sogou}</button><span class="sep"></span>
      <button class="zh">中</button>
      <button aria-label="标点">${I.punct}</button><button aria-label="语音">${I.mic}</button>
      <button aria-label="键盘">${I.keyb}</button><button aria-label="皮肤">${I.shirt}</button>
      <button aria-label="工具箱">${I.apps}</button><button aria-label="表情">${I.mascot}</button>`;
  }
}

@customElement("win-taskbar")
class WinTaskbar extends LitElement {
  static styles = [shared, css`
    :host { display: flex; height: 60px; color: #fff; background: linear-gradient(90deg, #162f38 0%, #152b37 55%, #10223a 80%, #0b1a38 100%); }
    .start { width: 72px; }
    .search { display: flex; align-items: center; gap: 16px; width: 516px; padding: 0 16px; background: #fff; color: #333; border: 1px solid #ccc; border-width: 1px 2px 2px 1px; font-size: 24px; line-height: 32px; }
    .search input { flex: 1; min-width: 0; }
    .search input::placeholder { color: #222; opacity: 1; }
    .sys { width: 72px; }
    .apps { display: grid; grid-template-columns: repeat(6, 1fr); width: 441px; margin-left: 4px; }
    .apps button { position: relative; }
    .apps button::after { content: ""; position: absolute; left: 6px; right: 7px; bottom: 0; height: 3px; background: #7ec0f2; }
    .apps .many::after { background: linear-gradient(90deg, #7ec0f2 78%, #5f8fb8 78%); }
    .apps .on { background: #465862; margin: 0 1px; }
    .apps .on::after { left: 0; right: 0; }
    .fill { flex: 1; }
    .tray { display: flex; align-items: center; }
    .tray button { width: 36px; height: 60px; }
    .zh { font-size: 20px; font-weight: 700; }
    .tray .sg { width: 60px; padding-right: 10px; }
    .tray .clock { display: block; width: 94px; text-align: center; font: 19px/28px "Open Sans", "Noto Sans", sans-serif; white-space: nowrap; }
    .tray .note { position: relative; width: 80px; }
    .badge { position: absolute; left: 37px; bottom: 7px; width: 24px; height: 24px; border: 1px solid #9aa4b5; border-radius: 50%; background: #1b2740; font: 700 18px/22px "Open Sans", sans-serif; }
    .peek { width: 7px; border-left: 1px solid #5b6780; }
  `];
  render() {
    return html`
      <button class="start" aria-label="开始">${I.win}</button>
      <label class="search">${I.search}<input placeholder="搜索" aria-label="搜索" /></label>
      <button class="sys" aria-label="Cortana">${I.ring}</button>
      <button class="sys" aria-label="任务视图">${I.view}</button>
      <div class="apps">
        <button aria-label="Edge">${I.edge}</button><button class="many" aria-label="文件资源管理器">${I.folder}</button>
        <button aria-label="Chrome">${I.chrome}</button><button aria-label="会议">${I.meeting}</button>
        <button class="on" aria-label="Excel">${I.excel}</button><button aria-label="微信">${I.wechat}</button>
      </div>
      <span class="fill"></span>
      <div class="tray">
        <button aria-label="显示隐藏的图标">${I.chev}</button><button aria-label="麦克风">${I.tmic}</button>
        <button aria-label="电池">${I.battery}</button><button aria-label="网络">${I.wifi}</button>
        <button aria-label="音量">${I.volume}</button><button class="zh">中</button>
        <button class="sg" aria-label="搜狗">${I.sogouTray}</button>
        <button class="clock">15:40<br />2025/10/9</button>
        <button class="note" aria-label="通知">${I.note}<span class="badge">2</span></button>
      </div>
      <span class="peek"></span>`;
  }
}

@customElement("app-root")
class AppRoot extends LitElement {
  static styles = css`
    :host { display: block; font: 18px/24px "Open Sans", "Noto Sans CJK SC", sans-serif; }
    .desktop { position: relative; display: flex; flex-direction: column; height: 100vh; overflow: hidden; background: #fff; }
    ime-bar { position: absolute; right: 4px; bottom: 61px; z-index: 3; }
  `;
  render() {
    return html`<div class="desktop">
      <excel-titlebar></excel-titlebar>
      <excel-ribbon></excel-ribbon>
      <excel-formula-bar></excel-formula-bar>
      <excel-sheet></excel-sheet>
      <excel-footer></excel-footer>
      <win-taskbar></win-taskbar>
      <ime-bar></ime-bar>
    </div>`;
  }
}
